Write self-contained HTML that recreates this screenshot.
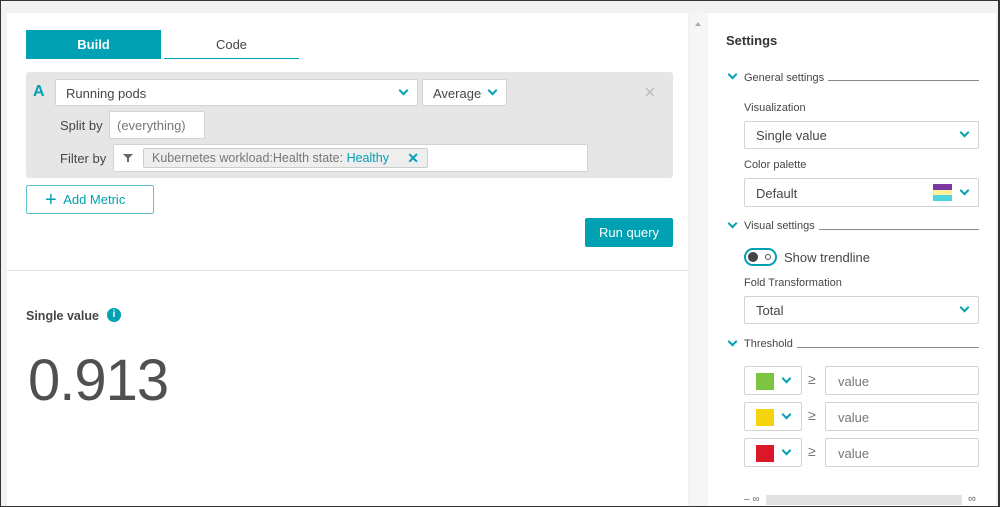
<!DOCTYPE html>
<html><head><meta charset="utf-8"><style>
*{box-sizing:border-box;margin:0;padding:0}
body{width:1000px;height:507px;overflow:hidden;background:#f2f2f2;font-family:"Liberation Sans",sans-serif;color:#454646;position:relative;font-size:13px}
.frame{position:absolute;left:0;top:0;width:1000px;height:507px;border:1px solid #333;border-right-width:2px;z-index:10;pointer-events:none}
.a{position:absolute}
.box{position:absolute;background:#fff;border:1px solid #d3d3d3;border-radius:2px}
.chev{position:absolute;width:7px;height:7px;border-right:2px solid #00a1b2;border-bottom:2px solid #00a1b2;transform:rotate(45deg)}
.lbl{position:absolute;font-size:11px;color:#454646}
.sec{position:absolute;font-size:11px;color:#454646;background:#fff;padding-right:4px}
.line{position:absolute;height:1px;background:#888}
</style></head><body>
<div class="frame"></div>
<div class="a" style="left:7px;top:13px;width:681px;height:494px;background:#fff"></div>
<div class="a" style="left:26px;top:30px;width:135px;height:29px;background:#00a1b2;color:#fff;font-weight:bold;text-align:center;line-height:29px;font-size:13px">Build</div>
<div class="a" style="left:164px;top:30px;width:135px;height:29px;border-bottom:1px solid #00a1b2;text-align:center;line-height:29px;font-size:13px">Code</div>
<div class="a" style="left:26px;top:72px;width:647px;height:106px;background:#e6e6e6;border-radius:3px"></div>
<div class="a" style="left:33px;top:83px;color:#00a1b2;font-size:16px;font-weight:bold">A</div>
<div class="box" style="left:55px;top:79px;width:363px;height:27px"><span class="a" style="left:10px;top:6px">Running pods</span><span class="chev" style="right:10px;top:7px"></span></div>
<div class="box" style="left:422px;top:79px;width:85px;height:27px"><span class="a" style="left:10px;top:6px">Average</span><span class="chev" style="right:10px;top:7px"></span></div>
<div class="a" style="left:644px;top:82px;color:#bbb;font-size:20px">×</div>
<div class="a" style="left:60px;top:118px">Split by</div>
<div class="box" style="left:109px;top:111px;width:96px;height:28px"><span class="a" style="left:7px;top:6px;color:#777">(everything)</span></div>
<div class="a" style="left:60px;top:151px">Filter by</div>
<div class="box" style="left:113px;top:144px;width:475px;height:28px">
<svg class="a" style="left:9px;top:8px" width="10" height="10" viewBox="0 0 10 10"><path d="M0 1h10L6 5v4H4V5z" fill="#666"/></svg>
<div class="a" style="left:29px;top:3px;width:285px;height:20px;background:#eee;border:1px solid #ccc;border-radius:2px;padding:2px 8px;color:#777;font-size:12.5px">Kubernetes workload:Health state: <span style="color:#00a1b2">Healthy</span><span style="color:#00a1b2;font-weight:bold;position:absolute;right:8px;top:1px;font-size:14px">✕</span></div></div>
<div class="a" style="left:26px;top:185px;width:128px;height:29px;border:1px solid #5fc3ce;border-radius:2px;color:#00a1b2;line-height:27px;padding-left:18px"><span style="font-size:20px;vertical-align:-2px">+</span>&nbsp; Add Metric</div>
<div class="a" style="left:585px;top:218px;width:88px;height:29px;background:#00a1b2;color:#fff;border-radius:2px;text-align:center;line-height:29px">Run query</div>
<div class="a" style="left:7px;top:270px;width:681px;height:1px;background:#e2e2e2"></div>
<div class="a" style="left:26px;top:309px;font-weight:bold;font-size:12.5px">Single value</div>
<div class="a" style="left:107px;top:308px;width:14px;height:14px;border-radius:50%;background:#00a1b2;color:#fff;font-size:10px;font-weight:bold;text-align:center;line-height:14px">i</div>
<div class="a" style="left:28px;top:347px;font-size:58px;color:#505050;letter-spacing:-1px">0.913</div>
<div class="a" style="left:690px;top:13px;width:18px;height:494px;background:#f6f6f6"></div>
<div class="a" style="left:695px;top:19px;border:3px solid transparent;border-bottom:4px solid #aaa"></div>
<div class="a" style="left:708px;top:13px;width:288px;height:494px;background:#fff"></div>
<div class="a" style="left:726px;top:33px;font-weight:bold;font-size:13px;color:#333">Settings</div>
<span class="chev" style="left:729px;top:71px"></span><div class="line" style="left:744px;top:80px;width:235px"></div><div class="sec" style="left:744px;top:72px">General settings</div>
<div class="lbl" style="left:744px;top:102px">Visualization</div>
<div class="box" style="left:744px;top:121px;width:235px;height:28px"><span class="a" style="left:11px;top:6px">Single value</span><span class="chev" style="right:10px;top:7px"></span></div>
<div class="lbl" style="left:744px;top:159px">Color palette</div>
<div class="box" style="left:744px;top:178px;width:235px;height:29px"><span class="a" style="left:11px;top:7px">Default</span>
<div class="a" style="left:188px;top:5px;width:19px;height:6px;background:#7c38a1"></div><div class="a" style="left:188px;top:11px;width:19px;height:5px;background:#fff29a"></div><div class="a" style="left:188px;top:16px;width:19px;height:6px;background:#4fd5e0"></div>
<span class="chev" style="right:10px;top:8px"></span></div>
<span class="chev" style="left:729px;top:220px"></span><div class="line" style="left:744px;top:229px;width:235px"></div><div class="sec" style="left:744px;top:220px">Visual settings</div>
<div class="a" style="left:744px;top:248px;width:33px;height:18px;border:2px solid #00a1b2;border-radius:9px"><div class="a" style="left:2px;top:2px;width:10px;height:10px;border-radius:50%;background:#444"></div><div class="a" style="left:19px;top:4px;width:6px;height:6px;border-radius:50%;border:1px solid #555"></div></div>
<div class="a" style="left:784px;top:250px">Show trendline</div>
<div class="lbl" style="left:744px;top:277px">Fold Transformation</div>
<div class="box" style="left:744px;top:296px;width:235px;height:28px"><span class="a" style="left:11px;top:6px">Total</span><span class="chev" style="right:10px;top:7px"></span></div>
<span class="chev" style="left:729px;top:338px"></span><div class="line" style="left:744px;top:347px;width:235px"></div><div class="sec" style="left:744px;top:338px">Threshold</div>
<div class="box" style="left:744px;top:366px;width:58px;height:29px"><div class="a" style="left:11px;top:6px;width:18px;height:17px;background:#7dc540"></div><span class="chev" style="left:38px;top:8px"></span></div>
<div class="box" style="left:744px;top:402px;width:58px;height:29px"><div class="a" style="left:11px;top:6px;width:18px;height:17px;background:#f5d30f"></div><span class="chev" style="left:38px;top:8px"></span></div>
<div class="box" style="left:744px;top:438px;width:58px;height:29px"><div class="a" style="left:11px;top:6px;width:18px;height:17px;background:#dc172a"></div><span class="chev" style="left:38px;top:8px"></span></div>
<div class="a" style="left:808px;top:371px;color:#777;font-size:14px">≥</div>
<div class="a" style="left:808px;top:407px;color:#777;font-size:14px">≥</div>
<div class="a" style="left:808px;top:443px;color:#777;font-size:14px">≥</div>
<div class="box" style="left:825px;top:366px;width:154px;height:29px"><span class="a" style="left:12px;top:7px;color:#777">value</span></div>
<div class="box" style="left:825px;top:402px;width:154px;height:29px"><span class="a" style="left:12px;top:7px;color:#777">value</span></div>
<div class="box" style="left:825px;top:438px;width:154px;height:29px"><span class="a" style="left:12px;top:7px;color:#777">value</span></div>
<div class="a" style="left:744px;top:494px;font-size:10px;color:#666">– ∞</div>
<div class="a" style="left:766px;top:495px;width:196px;height:10px;background:#e2e2e2"></div>
<div class="a" style="left:968px;top:493px;font-size:11px;color:#666">∞</div>
</body></html>
